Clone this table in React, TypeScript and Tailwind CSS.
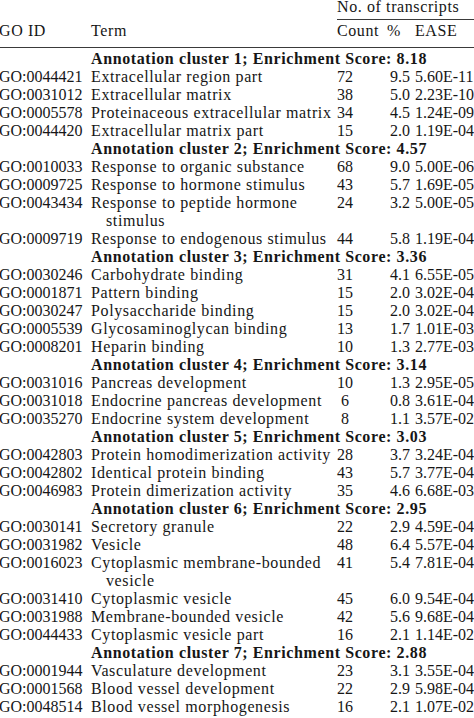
type Row =
  | { kind: "cluster"; label: string }
  | { kind: "term"; id: string; term: string[]; count: string; pct: string; ease: string };

const rows: Row[] = [
  { kind: "cluster", label: "Annotation cluster 1; Enrichment Score: 8.18" },
  { kind: "term", id: "GO:0044421", term: ["Extracellular region part"], count: "72", pct: "9.5", ease: "5.60E-11" },
  { kind: "term", id: "GO:0031012", term: ["Extracellular matrix"], count: "38", pct: "5.0", ease: "2.23E-10" },
  { kind: "term", id: "GO:0005578", term: ["Proteinaceous extracellular matrix"], count: "34", pct: "4.5", ease: "1.24E-09" },
  { kind: "term", id: "GO:0044420", term: ["Extracellular matrix part"], count: "15", pct: "2.0", ease: "1.19E-04" },
  { kind: "cluster", label: "Annotation cluster 2; Enrichment Score: 4.57" },
  { kind: "term", id: "GO:0010033", term: ["Response to organic substance"], count: "68", pct: "9.0", ease: "5.00E-06" },
  { kind: "term", id: "GO:0009725", term: ["Response to hormone stimulus"], count: "43", pct: "5.7", ease: "1.69E-05" },
  { kind: "term", id: "GO:0043434", term: ["Response to peptide hormone", "stimulus"], count: "24", pct: "3.2", ease: "5.00E-05" },
  { kind: "term", id: "GO:0009719", term: ["Response to endogenous stimulus"], count: "44", pct: "5.8", ease: "1.19E-04" },
  { kind: "cluster", label: "Annotation cluster 3; Enrichment Score: 3.36" },
  { kind: "term", id: "GO:0030246", term: ["Carbohydrate binding"], count: "31", pct: "4.1", ease: "6.55E-05" },
  { kind: "term", id: "GO:0001871", term: ["Pattern binding"], count: "15", pct: "2.0", ease: "3.02E-04" },
  { kind: "term", id: "GO:0030247", term: ["Polysaccharide binding"], count: "15", pct: "2.0", ease: "3.02E-04" },
  { kind: "term", id: "GO:0005539", term: ["Glycosaminoglycan binding"], count: "13", pct: "1.7", ease: "1.01E-03" },
  { kind: "term", id: "GO:0008201", term: ["Heparin binding"], count: "10", pct: "1.3", ease: "2.77E-03" },
  { kind: "cluster", label: "Annotation cluster 4; Enrichment Score: 3.14" },
  { kind: "term", id: "GO:0031016", term: ["Pancreas development"], count: "10", pct: "1.3", ease: "2.95E-05" },
  { kind: "term", id: "GO:0031018", term: ["Endocrine pancreas development"], count: "6", pct: "0.8", ease: "3.61E-04" },
  { kind: "term", id: "GO:0035270", term: ["Endocrine system development"], count: "8", pct: "1.1", ease: "3.57E-02" },
  { kind: "cluster", label: "Annotation cluster 5; Enrichment Score: 3.03" },
  { kind: "term", id: "GO:0042803", term: ["Protein homodimerization activity"], count: "28", pct: "3.7", ease: "3.24E-04" },
  { kind: "term", id: "GO:0042802", term: ["Identical protein binding"], count: "43", pct: "5.7", ease: "3.77E-04" },
  { kind: "term", id: "GO:0046983", term: ["Protein dimerization activity"], count: "35", pct: "4.6", ease: "6.68E-03" },
  { kind: "cluster", label: "Annotation cluster 6; Enrichment Score: 2.95" },
  { kind: "term", id: "GO:0030141", term: ["Secretory granule"], count: "22", pct: "2.9", ease: "4.59E-04" },
  { kind: "term", id: "GO:0031982", term: ["Vesicle"], count: "48", pct: "6.4", ease: "5.57E-04" },
  { kind: "term", id: "GO:0016023", term: ["Cytoplasmic membrane-bounded", "vesicle"], count: "41", pct: "5.4", ease: "7.81E-04" },
  { kind: "term", id: "GO:0031410", term: ["Cytoplasmic vesicle"], count: "45", pct: "6.0", ease: "9.54E-04" },
  { kind: "term", id: "GO:0031988", term: ["Membrane-bounded vesicle"], count: "42", pct: "5.6", ease: "9.68E-04" },
  { kind: "term", id: "GO:0044433", term: ["Cytoplasmic vesicle part"], count: "16", pct: "2.1", ease: "1.14E-02" },
  { kind: "cluster", label: "Annotation cluster 7; Enrichment Score: 2.88" },
  { kind: "term", id: "GO:0001944", term: ["Vasculature development"], count: "23", pct: "3.1", ease: "3.55E-04" },
  { kind: "term", id: "GO:0001568", term: ["Blood vessel development"], count: "22", pct: "2.9", ease: "5.98E-04" },
  { kind: "term", id: "GO:0048514", term: ["Blood vessel morphogenesis"], count: "16", pct: "2.1", ease: "1.07E-02" },
];

const cols = "grid grid-cols-[92px_246px_48px_25px_1fr]";

export default function App() {
  return (
    <div
      className="w-[474px] h-[718px] overflow-hidden bg-white text-[#161616] text-[16px] leading-[18px]"
      style={{ fontFamily: '"Liberation Serif", "Times New Roman", serif' }}
    >
      <div className="w-[520px] ml-[-1px]">
        {/* header */}
        <div className={cols}>
          <div />
          <div />
          <div className="col-span-3 h-[20px] pb-[6px] leading-[14px] tracking-[0.6px] border-b border-[#3a3a3a]">
            No. of transcripts
          </div>
        </div>
        <div className={`${cols} pt-[2px] pb-[7px] border-b border-[#3a3a3a] tracking-[0.6px]`}>
          <div>GO ID</div>
          <div>Term</div>
          <div>Count</div>
          <div className="pl-[2px]">%</div>
          <div className="pl-[5px]">EASE</div>
        </div>

        {/* body */}
        <div className="pt-[2px]">
          {rows.map((r, i) =>
            r.kind === "cluster" ? (
              <div key={i} className={cols}>
                <div />
                <div className="col-span-4 font-bold tracking-[0.6px] whitespace-nowrap">{r.label}</div>
              </div>
            ) : (
              <div key={i} className={cols}>
                <div>{r.id}</div>
                <div className="tracking-[0.62px] whitespace-nowrap">
                  {r.term.map((t, j) => (
                    <div key={j} className={j > 0 ? "pl-[15px]" : ""}>
                      {t}
                    </div>
                  ))}
                </div>
                <div className={r.count.length === 1 ? "pl-[4px]" : ""}>{r.count}</div>
                <div className="text-right">{r.pct}</div>
                <div className="pl-[5px] whitespace-nowrap">{r.ease}</div>
              </div>
            )
          )}
        </div>
      </div>
    </div>
  );
}
